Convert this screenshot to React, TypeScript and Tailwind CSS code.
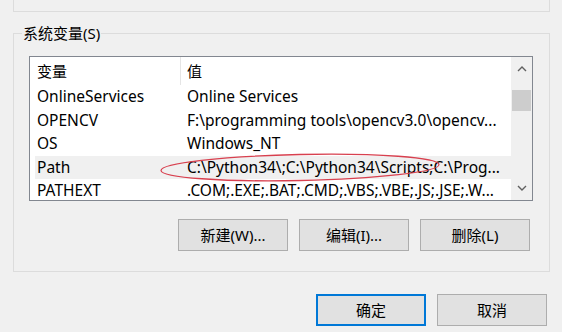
import React from "react";

const font = {
  fontFamily: '"Segoe UI", "Noto Sans", "Noto Sans CJK SC", sans-serif',
};

const rows: [string, string][] = [
  ["OnlineServices", "Online Services"],
  ["OPENCV", "F:\\programming tools\\opencv3.0\\opencv..."],
  ["OS", "Windows_NT"],
  ["Path", "C:\\Python34\\;C:\\Python34\\Scripts;C:\\Prog..."],
  ["PATHEXT", ".COM;.EXE;.BAT;.CMD;.VBS;.VBE;.JS;.JSE;.W..."],
];

function Btn({ children, primary }: { children: React.ReactNode; primary?: boolean }) {
  return (
    <div
      className={
        "flex h-[32px] w-[110px] items-center justify-center bg-[#e1e1e1] text-[15px] text-black " +
        (primary ? "border-2 border-[#0078d7]" : "border border-[#adadad]")
      }
    >
      {children}
    </div>
  );
}

function Chevron({ up }: { up?: boolean }) {
  return (
    <svg width="10" height="6" viewBox="0 0 10 6" className="block">
      <path
        d={up ? "M1 5 L5 1 L9 5" : "M1 1 L5 5 L9 1"}
        fill="none"
        stroke="#606060"
        strokeWidth="1.4"
      />
    </svg>
  );
}

export default function App() {
  return (
    <div
      className="relative flex h-[332px] w-[562px] flex-col overflow-hidden bg-[#f0f0f0] text-[15.5px] text-black"
      style={font}
    >
      {/* previous group box bottom */}
      <div className="ml-[13px] h-[12px] w-[537px] border-x border-b border-[#dcdcdc]" />

      {/* system variables group */}
      <div className="relative ml-[13px] mt-[21px] flex h-[239px] w-[537px] flex-col border border-[#dcdcdc]">
        <div className="absolute left-[8px] top-[-11px] bg-[#f0f0f0] px-[1px] text-[15px] leading-[20px]">
          系统变量(S)
        </div>

        {/* list */}
        <div className="ml-[15px] mt-[22px] flex h-[145px] w-[504px] border border-[#828790] bg-white">
          <div className="flex min-w-0 flex-1 flex-col pl-[5px]">
            <div className="flex h-[28px] shrink-0 items-center">
              <div className="w-[145px] pl-[2px] text-[15px]">变量</div>
              <div className="h-full w-px bg-[#e5e5e5]" />
              <div className="pl-[6px] text-[15px]">值</div>
            </div>
            {rows.map(([k, v]) => (
              <div
                key={k}
                className={
                  "flex h-[23.5px] shrink-0 items-center whitespace-nowrap " +
                  (k === "Path" ? "bg-[#f0f0f0]" : "")
                }
              >
                <div className="w-[145px] pl-[2px]">{k}</div>
                <div className="w-px" />
                <div className="min-w-0 flex-1 overflow-hidden pl-[6px]">{v}</div>
              </div>
            ))}
          </div>
          {/* scrollbar */}
          <div className="relative flex w-[21px] flex-col items-center bg-[#f0f0f0]">
            <div className="mt-[9px]">
              <Chevron up />
            </div>
            <div className="mt-[18px] h-[21px] w-[19px] bg-[#cdcdcd]" />
            <div className="flex-1" />
            <div className="mb-[9px]">
              <Chevron />
            </div>
          </div>
        </div>

        <div className="ml-[164px] mt-[18px] flex gap-[11px]">
          <Btn>新建(W)...</Btn>
          <Btn>编辑(I)...</Btn>
          <Btn>删除(L)</Btn>
        </div>
      </div>

      <div className="ml-[316px] mt-[22px] flex gap-[11px]">
        <Btn primary>确定</Btn>
        <Btn>取消</Btn>
      </div>

      {/* red annotation ellipse */}
      <svg
        className="pointer-events-none absolute left-0 top-0"
        width="562"
        height="332"
        viewBox="0 0 562 332"
      >
        <ellipse
          cx="300"
          cy="167.5"
          rx="139"
          ry="13"
          transform="rotate(-1.2 300 167.5)"
          fill="none"
          stroke="#d8404f"
          strokeWidth="1.3"
        />
      </svg>
    </div>
  );
}
